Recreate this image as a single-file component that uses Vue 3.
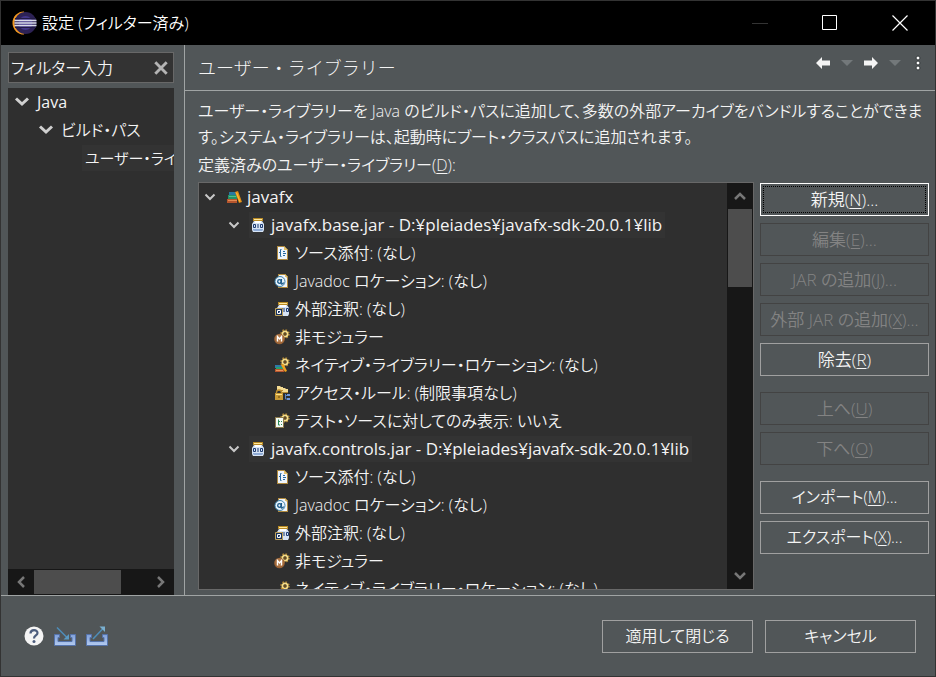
<script setup>
import { ref } from 'vue'

const filter = ref('フィルター入力')

const details = [
  { icon: 'source', label: 'ソース添付: (なし)' },
  { icon: 'javadoc', label: 'Javadoc ロケーション: (なし)' },
  { icon: 'annotation', label: '外部注釈: (なし)' },
  { icon: 'modular', label: '非モジュラー' },
  { icon: 'native', label: 'ネイティブ・ライブラリー・ロケーション: (なし)' },
  { icon: 'access', label: 'アクセス・ルール: (制限事項なし)' },
  { icon: 'test', label: 'テスト・ソースに対してのみ表示: いいえ' },
]

const libraryRow = { level: 0, open: true, icon: 'library', label: 'javafx' }
const jarRow = (jar) => ({ level: 1, open: true, icon: 'jar', label: `${jar} - D:¥pleiades¥javafx-sdk-20.0.1¥lib` })
const detailRows = details.map((d) => ({ ...d, level: 2 }))

const rows = [
  libraryRow,
  jarRow('javafx.base.jar'),
  ...detailRows,
  jarRow('javafx.controls.jar'),
  ...detailRows.slice(0, 5),
]

const groups = [
  [
    { text: '新規', key: 'N', more: '...', focus: true },
    { text: '編集', key: 'E', more: '...', disabled: true },
    { text: 'JAR の追加', key: 'J', more: '...', disabled: true },
    { text: '外部 JAR の追加', key: 'X', more: '...', disabled: true },
    { text: '除去', key: 'R', more: '' },
  ],
  [
    { text: '上へ', key: 'U', more: '', disabled: true },
    { text: '下へ', key: 'O', more: '', disabled: true },
  ],
  [
    { text: 'インポート', key: 'M', more: '...', kana: true },
    { text: 'エクスポート', key: 'X', more: '...', kana: true },
  ],
]
</script>

<template>
  <svg class="sprite" aria-hidden="true">
    <defs>
      <linearGradient id="tray" x1="0" y1="0" x2="0" y2="1">
        <stop offset="0" stop-color="#7f9fd8" />
        <stop offset="1" stop-color="#b4cbf0" />
      </linearGradient>
      <symbol id="gear" viewBox="0 0 10 10">
        <circle cx="5" cy="5" r="4" fill="none" stroke="#a98032" stroke-width="1.6" stroke-dasharray="1.6 1.54" />
        <circle cx="5" cy="5" r="2.6" fill="none" stroke="#f6dc85" stroke-width="1.8" />
        <circle cx="5" cy="5" r="1.2" fill="#6b4b1b" />
      </symbol>
    </defs>
    <symbol id="library" viewBox="0 0 16 16">
      <path d="M3 3h8v3H3z" fill="#2878a0" />
      <path d="M2 6h9v4H2z" fill="#239066" />
      <path d="M3 7h7v1H3z" fill="#4fbd90" />
      <path d="M1 10h10v4H1z" fill="#b5552d" />
      <path d="M2 11h9v1H2z" fill="#e28a55" />
      <path d="M9 3l3-1 4 11-3 1z" fill="#e08c14" />
      <path d="M10 4l1-.5 3.500 9-1 .5z" fill="#ffb935" />
    </symbol>
    <symbol id="jar" viewBox="0 0 16 16">
      <path d="M3 1h10v3H3z" fill="#b98a24" />
      <path d="M4 2h8v1H4z" fill="#ffe79a" />
      <path d="M4 4h8l2 3v6l-1 2H3l-1-2V7z" fill="#d7e4f5" />
      <path d="M5 4h6v2H5z" fill="#fff" />
      <path d="M3 12h10v1l-1 1H4l-1-1z" fill="#8fabd6" />
      <path d="M3.500 7.500h2v3h-2zM8 7v4M10.500 7.500h2v3h-2z" fill="none" stroke="#1d3a70" />
    </symbol>
    <symbol id="source" viewBox="0 0 16 16">
      <path d="M3 1h7l4 4v10H3z" fill="#b08a3e" />
      <path d="M4 2h6l3 3v9H4z" fill="#eef4fc" />
      <path d="M10 1l4 4h-4z" fill="#e3c069" />
      <path d="M7.500 4.500h-1v3h-1.500h1.500v4h1M9 6.500h2M9 8.500h3M9 10.500h2" fill="none" stroke="#27699f" />
    </symbol>
    <symbol id="javadoc" viewBox="0 0 16 16">
      <path d="M4 1h7l3 3v11H4z" fill="#b08a3e" />
      <path d="M5 2h6l2 3v9H5z" fill="#f1f5fb" />
      <path d="M11 1l3 3h-3z" fill="#e3c069" />
      <circle cx="6" cy="8.500" r="5" fill="#e8f3fb" stroke="#3d83ae" />
      <circle cx="5.500" cy="8.500" r="1.800" fill="none" stroke="#185888" stroke-width="1.300" />
      <path d="M7.500 6l-.5 4.500c.5 1 2 .5 2.500-1" fill="none" stroke="#185888" stroke-width="1.300" />
    </symbol>
    <symbol id="annotation" viewBox="0 0 16 16">
      <path d="M4 1h10v3H4z" fill="#b98a24" />
      <path d="M5 2h8v1H5z" fill="#ffe79a" />
      <path d="M5 4h8l2 3v6l-1 2H4l-1-2V7z" fill="#d7e4f5" />
      <path d="M6 4h6v2H6z" fill="#fff" />
      <path d="M10 7v4M12.500 7.500h2v3h-2z" fill="none" stroke="#1d3a70" />
      <path d="M1 7h8v8H1z" fill="#17325e" />
      <path d="M1.500 7.500h7v7h-7z" fill="none" stroke="#c1a35b" />
      <path d="M3.500 12.500v-3h3v2.500h-1.500M3.500 12.500h3" fill="none" stroke="#fff" />
    </symbol>
    <symbol id="modular" viewBox="0 0 16 16">
      <use href="#gear" x="6" y="0" width="10" height="10" />
      <circle cx="5.500" cy="10" r="5.300" fill="#9b6235" />
      <circle cx="5.500" cy="9.500" r="4" fill="#b17b4b" />
      <path d="M3.500 12.500v-5l2 2.500 2-2.500v5" fill="none" stroke="#fff" stroke-width="1.300" />
    </symbol>
    <symbol id="native" viewBox="0 0 16 16">
      <use href="#gear" x="6" y="0" width="10" height="10" />
      <path d="M1 8h8v3H1z" fill="#2f78a8" />
      <path d="M2 10h8v2H2z" fill="#28a06c" />
      <path d="M1 12h9v3H1z" fill="#b9562d" />
      <path d="M2 13h7v1H2z" fill="#e8935b" />
      <path d="M7 8l2.500-1 3.500 7-2 1z" fill="#f2a31c" />
    </symbol>
    <symbol id="access" viewBox="0 0 16 16">
      <path d="M3 1h3l1 1h2v4H3zM8 3h3l1 1h2v4H8z" fill="#f5dc93" />
      <path d="M3 5h6v1H3zM8 7h6v1H8z" fill="#b88b34" />
      <path d="M2.500 9V7.500a2 2 0 0 1 5 0V9" fill="none" stroke="#b98c2f" stroke-width="1.400" />
      <path d="M1 8h8v7H1z" fill="#c99a35" />
      <path d="M2 9h6v1H2z" fill="#ffe28a" />
      <path d="M4.500 11h1v2h-1z" fill="#64440f" />
      <path d="M11.500 9v5H13M11.500 10.500H13" fill="none" stroke="#5b83c0" />
      <path d="M13 9h3v2h-3zM13 13h3v2h-3z" fill="#6d96d8" />
    </symbol>
    <symbol id="test" viewBox="0 0 16 16">
      <use href="#gear" x="6" y="0" width="10" height="10" />
      <path d="M1 4h9v11H1z" fill="#8a7a4e" />
      <path d="M2 5h7v9H2z" fill="#f5faf5" />
      <path d="M4.500 6.500v5.500H6M4.500 8.500H6M7 8.500h1M7 11.500h1" fill="none" stroke="#2b8a57" />
    </symbol>
    <symbol id="chevron" viewBox="0 0 12 12">
      <path d="M1.500 3.500L6 8l4.500-4.500" fill="none" stroke="currentColor" stroke-width="2" />
    </symbol>
    <symbol id="chevron-bold" viewBox="0 0 16 16">
      <path d="M2 4.500l6 5.500 6-5.500" fill="none" stroke="currentColor" stroke-width="3" />
    </symbol>
    <symbol id="scroll-arrow" viewBox="0 0 14 14">
      <path d="M2 10l5-5 5 5" fill="none" stroke="currentColor" stroke-width="2.500" />
    </symbol>
    <symbol id="arrow" viewBox="0 0 16 14">
      <path d="M1 7l6-6v3.500h8v5H7V13z" fill="#f4f4f4" />
    </symbol>
  </svg>

  <div class="window">
    <header class="titlebar">
      <svg class="logo" viewBox="0 0 26 24" aria-hidden="true">
        <path d="M13 .5A11.500 11.500 0 0 0 13 23.500L15 12z" fill="#f49a20" />
        <circle cx="14.500" cy="12" r="11" fill="#2d2255" />
        <circle cx="14.500" cy="12" r="7" fill="#43368a" />
        <path d="M4 7.500h21M4 16.500h21" stroke="#211b45" />
        <path d="M3.500 9.500h22M3.500 12h22M3.500 14.500h22" stroke="#d9dbe8" stroke-width="1.500" />
      </svg>
      <span class="caption">設定 (フィルター済み)</span>
      <div class="controls">
        <button class="control" aria-label="最小化" disabled>
          <svg viewBox="0 0 16 16"><path d="M0 8.500h16" stroke="#333" /></svg>
        </button>
        <button class="control" aria-label="最大化">
          <svg viewBox="0 0 16 16"><path d="M.5 .5h14v14H.5z" fill="none" stroke="#fff" /></svg>
        </button>
        <button class="control" aria-label="閉じる">
          <svg viewBox="0 0 16 16"><path d="M.5 .5l15 15M15.500 .5l-15 15" stroke="#fff" stroke-width="1.200" /></svg>
        </button>
      </div>
    </header>

    <div class="body">
      <aside class="sidebar">
        <div class="filter">
          <input v-model="filter" type="text" aria-label="フィルター入力" />
          <button class="clear" aria-label="クリア" @click="filter = ''">
            <svg viewBox="0 0 14 14"><path d="M2 2l10 10M12 2L2 12" stroke="#b4b4b4" stroke-width="2.500" /></svg>
          </button>
        </div>
        <nav class="pages">
          <ul class="page-list">
            <li class="page latin"><svg class="fold"><use href="#chevron-bold" /></svg>Java</li>
            <li class="page nested"><svg class="fold"><use href="#chevron-bold" /></svg>ビルド・パス</li>
            <li class="page leaf"><span class="current">ユーザー・ライ</span></li>
          </ul>
          <div class="hscroll">
            <svg class="scroll-icon left"><use href="#scroll-arrow" /></svg>
            <div class="htrack"><div class="hthumb"></div></div>
            <svg class="scroll-icon right"><use href="#scroll-arrow" /></svg>
          </div>
        </nav>
      </aside>

      <main class="content">
        <div class="heading">
          <h1>ユーザー・ライブラリー</h1>
          <div class="history">
            <button class="tool" aria-label="戻る"><svg class="arrow"><use href="#arrow" /></svg></button>
            <button class="tool" aria-label="戻る履歴"><svg class="drop" viewBox="0 0 12 6"><path d="M0 0h12L6 6z" fill="#73787a" /></svg></button>
            <button class="tool" aria-label="進む"><svg class="arrow forward"><use href="#arrow" /></svg></button>
            <button class="tool" aria-label="進む履歴"><svg class="drop" viewBox="0 0 12 6"><path d="M0 0h12L6 6z" fill="#73787a" /></svg></button>
            <button class="tool" aria-label="メニュー">
              <svg class="dots" viewBox="0 0 6 16"><g fill="#fff" stroke="#33383a"><circle cx="3" cy="3" r="2" /><circle cx="3" cy="8" r="2" /><circle cx="3" cy="13" r="2" /></g></svg>
            </button>
          </div>
        </div>
        <div class="page-body">
          <p class="intro">ユーザー・ライブラリーを Java のビルド・パスに追加して、多数の外部アーカイブをバンドルすることができま<br />す。システム・ライブラリーは、起動時にブート・クラスパスに追加されます。</p>
          <p id="list-label" class="list-label">定義済みのユーザー・ライブラリー(<u>D</u>):</p>
          <div class="columns">
            <div class="tree">
              <ul class="rows" role="tree" aria-labelledby="list-label">
                <li v-for="(row, i) in rows" :key="i" role="treeitem" class="row" :class="'level-' + row.level">
                  <span class="twist"><svg v-if="row.open"><use href="#chevron" /></svg></span>
                  <span class="item"><svg class="icon"><use :href="'#' + row.icon" /></svg>{{ row.label }}</span>
                </li>
              </ul>
              <div class="vscroll">
                <svg class="scroll-icon"><use href="#scroll-arrow" /></svg>
                <div class="vtrack"><div class="vthumb"></div></div>
                <svg class="scroll-icon down"><use href="#scroll-arrow" /></svg>
              </div>
            </div>
            <div class="actions">
              <div v-for="(group, g) in groups" :key="g" class="group">
                <button v-for="b in group" :key="b.text" class="button" :class="{ focused: b.focus, kana: b.kana }" :disabled="b.disabled">
                  <span>{{ b.text }}(<u>{{ b.key }}</u>){{ b.more }}</span>
                </button>
              </div>
            </div>
          </div>
        </div>
      </main>
    </div>

    <footer class="footer">
      <div class="links">
        <button class="tool" aria-label="ヘルプ">
          <svg class="help" viewBox="0 0 20 20">
            <circle cx="10" cy="10" r="9.500" fill="#f4f4f4" />
            <path d="M6.500 7.500c0-4.500 7-4.500 7-.5 0 2.500-3.500 2.500-3.500 5.500" fill="none" stroke="#4d5d7d" stroke-width="2.200" />
            <circle cx="10" cy="15.500" r="1.500" fill="#4d5d7d" />
          </svg>
        </button>
        <button class="tool" aria-label="設定のインポート">
          <svg class="port" viewBox="0 0 22 20">
            <path d="M5.500 8.500h-5v11h21v-11h-5v3h1.500v4H4v-4h1.500z" fill="url(#tray)" stroke="#5573ab" />
            <path d="M3 1.500l10 10" stroke="#4e8db8" stroke-width="1.500" />
            <path d="M15 13.500H9.500L15 8z" fill="#5b9ac2" />
          </svg>
        </button>
        <button class="tool" aria-label="設定のエクスポート">
          <svg class="port" viewBox="0 0 22 20">
            <path d="M5.500 8.500h-5v11h21v-11h-5v3h1.500v4H4v-4h1.500z" fill="url(#tray)" stroke="#5573ab" />
            <path d="M7 13L17 2.500" stroke="#4e8db8" stroke-width="1.500" />
            <path d="M13.500 .5H19V6z" fill="#7bb0d0" />
          </svg>
        </button>
      </div>
      <div class="decide">
        <button class="button wide">適用して閉じる</button>
        <button class="button wide">キャンセル</button>
      </div>
    </footer>
  </div>
</template>

<style>
body {
  background: #515658;
}
</style>

<style scoped>
* {
  box-sizing: border-box;
}
.sprite {
  position: absolute;
  width: 0;
  height: 0;
}
.window {
  display: flex;
  flex-direction: column;
  height: 100vh;
  border: 1px solid #333;
  background: #515658;
  color: #f4f4f4;
  font-family: "Open Sans", "Noto Sans CJK JP", sans-serif;
  font-size: 16px;
  font-weight: 350;
  font-feature-settings: "palt";
  line-height: 26px;
  white-space: nowrap;
}
ul,
p,
h1 {
  margin: 0;
  padding: 0;
  list-style: none;
}
u {
  text-underline-offset: 2px;
  text-decoration-thickness: 1px;
}
button,
input {
  margin: 0;
  padding: 0;
  border: 0;
  background: none;
  color: inherit;
  font: inherit;
  font-feature-settings: inherit;
}
button svg {
  display: block;
}
.titlebar {
  display: flex;
  flex: none;
  align-items: center;
  gap: 5px;
  height: 44px;
  padding-left: 10px;
  background: #000;
  color: #fff;
}
.logo {
  width: 26px;
  height: 24px;
}
.controls {
  display: flex;
  margin-left: auto;
}
.control {
  display: grid;
  place-items: center;
  width: 70px;
  height: 44px;
}
.control svg {
  width: 16px;
  height: 16px;
}
.body {
  display: flex;
  flex: 1;
  min-height: 0;
  border-bottom: 1px solid #a0a4a4;
}
.sidebar {
  display: flex;
  flex: 0 0 184px;
  flex-direction: column;
  gap: 5px;
  min-width: 0;
  padding: 7px 10px 0 7px;
  border-right: 1px solid #a0a4a4;
}
.filter {
  display: flex;
  align-items: center;
  height: 31px;
  padding: 0 4px 0 2px;
  border: 1px solid #686868;
  background: #333;
}
.filter input {
  flex: 1;
  width: 0;
  min-width: 0;
  outline: 0;
}
.clear svg {
  width: 16px;
  height: 16px;
}
.pages {
  display: flex;
  flex: 1;
  flex-direction: column;
  min-height: 0;
  background: #2f2f2f;
}
.page-list {
  flex: 1;
  overflow: hidden;
}
.page {
  display: flex;
  align-items: center;
  gap: 7px;
  height: 28px;
  padding-left: 6px;
}
.page.nested {
  padding-left: 30px;
}
.page.leaf {
  padding-left: 74px;
  font-size: 15px;
}
.latin {
  font-weight: 400;
}
.current {
  flex: 1;
  padding-left: 3px;
  background: #333;
}
.fold {
  flex: none;
  width: 16px;
  height: 16px;
  color: #d0d0d0;
}
.hscroll {
  display: flex;
  align-items: center;
  height: 26px;
  background: #171717;
}
.scroll-icon {
  flex: none;
  width: 14px;
  height: 14px;
  margin: 6px;
  color: #777;
}
.left {
  transform: rotate(-90deg);
}
.right {
  transform: rotate(90deg);
}
.down {
  transform: rotate(180deg);
}
.htrack {
  flex: 1;
  height: 24px;
}
.hthumb {
  width: 76%;
  height: 24px;
  background: #4d4d4d;
}
.content {
  display: flex;
  flex: 1;
  flex-direction: column;
  min-width: 0;
}
.heading {
  display: flex;
  flex: none;
  align-items: center;
  justify-content: space-between;
  height: 46px;
  padding: 0 14px 0 13px;
  border-bottom: 1px solid #a0a4a4;
}
h1 {
  font-size: 18px;
  font-weight: 300;
  font-feature-settings: normal;
}
.history {
  display: flex;
  align-items: center;
  align-self: flex-start;
  gap: 10px;
  height: 36px;
}
.arrow {
  width: 16px;
  height: 14px;
}
.forward {
  transform: rotate(180deg);
}
.drop {
  width: 12px;
  height: 6px;
}
.dots {
  width: 6px;
  height: 16px;
  margin-left: 4px;
}
.page-body {
  display: flex;
  flex: 1;
  flex-direction: column;
  min-height: 0;
  padding: 7px 6px 5px 13px;
}
.list-label {
  margin: 2px 0 4px;
}
.columns {
  display: flex;
  flex: 1;
  gap: 6px;
  min-height: 0;
}
.tree {
  display: flex;
  flex: 1;
  min-width: 0;
  border: 1px solid #686868;
  background: #2f2f2f;
}
.rows {
  flex: 1;
  min-width: 0;
  overflow: hidden;
}
.row {
  display: flex;
  align-items: center;
  height: 28px;
}
.level-0,
.level-1 {
  font-size: 17px;
  font-weight: 400;
}
.level-1 {
  padding-left: 24px;
}
.level-2 {
  padding-left: 48px;
}
.twist {
  display: grid;
  flex: none;
  place-items: center;
  width: 22px;
  margin-right: 4px;
  color: #c8c8c8;
}
.twist svg {
  width: 12px;
  height: 12px;
}
.item {
  display: flex;
  align-items: center;
  gap: 5px;
  padding: 0 3px 0 1px;
}
.level-1 .item {
  background: #333;
}
.icon {
  flex: none;
  width: 16px;
  height: 16px;
}
.vscroll {
  display: flex;
  flex: none;
  flex-direction: column;
  width: 26px;
  background: #171717;
}
.vtrack {
  flex: 1;
  padding: 0 1px;
}
.vthumb {
  height: 22%;
  background: #4d4d4d;
}
.actions {
  display: flex;
  flex: 0 0 169px;
  flex-direction: column;
  gap: 16px;
  padding-top: 1px;
  font-size: 17px;
}
.group {
  display: flex;
  flex-direction: column;
  gap: 7px;
}
.button {
  height: 33px;
  border: 1px solid #a0a0a0;
  line-height: 25px;
}
.button:disabled {
  border-color: #434343;
  color: #838383;
}
.kana {
  font-size: 16px;
}
.focused {
  padding: 2px;
  border-color: #fff;
}
.focused span {
  display: block;
  height: 27px;
  border: 1px dotted #fff;
  outline: 1px dotted #000;
  outline-offset: -1px;
}
.footer {
  display: flex;
  flex: none;
  align-items: center;
  justify-content: space-between;
  height: 80px;
  padding: 0 19px 0 23px;
}
.links {
  display: flex;
  align-items: center;
  gap: 10px;
}
.help {
  width: 20px;
  height: 20px;
}
.port {
  width: 22px;
  height: 20px;
}
.decide {
  display: flex;
  gap: 12px;
}
.wide {
  width: 151px;
}
</style>
